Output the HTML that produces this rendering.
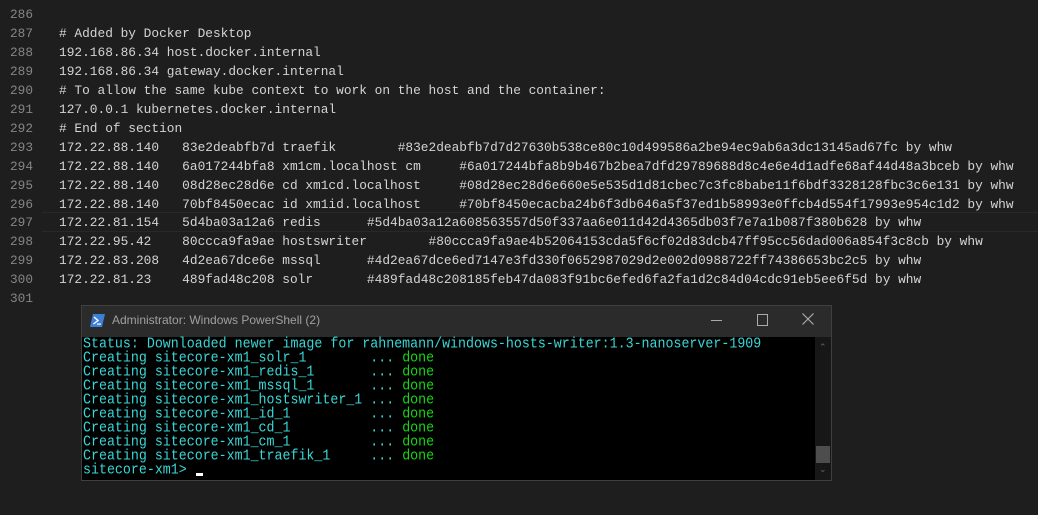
<!DOCTYPE html>
<html><head><style>
body{margin:0;width:1038px;height:515px;background:#1e1e1e;overflow:hidden;position:relative;font-family:"Liberation Mono",monospace}
.ln{position:absolute;left:0;width:33px;text-align:right;color:#858585;font-size:12.75px;line-height:19px;height:19px}
.tx{position:absolute;left:59px;color:#d4d4d4;font-size:12.83px;line-height:19px;white-space:pre}
.cur{position:absolute;left:42px;right:0;top:212px;height:18px;border-top:1px solid #282828;border-bottom:1px solid #282828}
.win{position:absolute;left:81px;top:305px;width:751px;height:176px;background:#2b2b2b;border:1px solid #3f3f3f;box-sizing:border-box}
.title{position:absolute;left:30px;top:7px;color:#a0a0a0;font-family:"Liberation Sans",sans-serif;font-size:12px}
.con{position:absolute;left:0;top:31px;width:733px;height:143px;background:#000}
.t{position:absolute;left:1px;font-size:13.3px;line-height:14px;white-space:pre;color:#3ad7d7;transform:scaleY(1.1);transform-origin:0 50%}
.g{color:#16d616}
.sb{position:absolute;left:733px;top:31px;width:16px;height:143px;background:#171717}
</style></head><body>
<div class="cur"></div>
<div class="ln" style="top:5px">286</div>
<div class="ln" style="top:24px">287</div><div class="tx" style="top:24px"># Added by Docker Desktop</div>
<div class="ln" style="top:43px">288</div><div class="tx" style="top:43px">192.168.86.34 host.docker.internal</div>
<div class="ln" style="top:62px">289</div><div class="tx" style="top:62px">192.168.86.34 gateway.docker.internal</div>
<div class="ln" style="top:81px">290</div><div class="tx" style="top:81px"># To allow the same kube context to work on the host and the container:</div>
<div class="ln" style="top:100px">291</div><div class="tx" style="top:100px">127.0.0.1 kubernetes.docker.internal</div>
<div class="ln" style="top:119px">292</div><div class="tx" style="top:119px"># End of section</div>
<div class="ln" style="top:138px">293</div><div class="tx" style="top:138px">172.22.88.140   83e2deabfb7d traefik        #83e2deabfb7d7d27630b538ce80c10d499586a2be94ec9ab6a3dc13145ad67fc by whw</div>
<div class="ln" style="top:157px">294</div><div class="tx" style="top:157px">172.22.88.140   6a017244bfa8 xm1cm.localhost cm     #6a017244bfa8b9b467b2bea7dfd29789688d8c4e6e4d1adfe68af44d48a3bceb by whw</div>
<div class="ln" style="top:176px">295</div><div class="tx" style="top:176px">172.22.88.140   08d28ec28d6e cd xm1cd.localhost     #08d28ec28d6e660e5e535d1d81cbec7c3fc8babe11f6bdf3328128fbc3c6e131 by whw</div>
<div class="ln" style="top:195px">296</div><div class="tx" style="top:195px">172.22.88.140   70bf8450ecac id xm1id.localhost     #70bf8450ecacba24b6f3db646a5f37ed1b58993e0ffcb4d554f17993e954c1d2 by whw</div>
<div class="ln" style="top:213px">297</div><div class="tx" style="top:213px">172.22.81.154   5d4ba03a12a6 redis      #5d4ba03a12a608563557d50f337aa6e011d42d4365db03f7e7a1b087f380b628 by whw</div>
<div class="ln" style="top:232px">298</div><div class="tx" style="top:232px">172.22.95.42    80ccca9fa9ae hostswriter        #80ccca9fa9ae4b52064153cda5f6cf02d83dcb47ff95cc56dad006a854f3c8cb by whw</div>
<div class="ln" style="top:251px">299</div><div class="tx" style="top:251px">172.22.83.208   4d2ea67dce6e mssql      #4d2ea67dce6ed7147e3fd330f0652987029d2e002d0988722ff74386653bc2c5 by whw</div>
<div class="ln" style="top:270px">300</div><div class="tx" style="top:270px">172.22.81.23    489fad48c208 solr       #489fad48c208185feb47da083f91bc6efed6fa2fa1d2c84d04cdc91eb5ee6f5d by whw</div>
<div class="ln" style="top:289px">301</div>

<div class="win">
<svg style="position:absolute;left:8px;top:8px" width="15" height="13"><polygon points="3,0 15,0 12,13 0,13" fill="#3d7fd6"/><path d="M4 3 L8 6.5 L3.5 10" stroke="#fff" stroke-width="1.4" fill="none"/><rect x="7" y="9.5" width="4" height="1.2" fill="#fff"/></svg>
<div class="title">Administrator: Windows PowerShell (2)</div>
<div style="position:absolute;left:629px;top:14px;width:11px;height:1px;background:#aaa"></div>
<div style="position:absolute;left:675px;top:8px;width:9px;height:10px;border:1px solid #aaa"></div>
<svg style="position:absolute;left:720px;top:7px" width="12" height="12"><path d="M0.5 0.5L11.5 11.5M11.5 0.5L0.5 11.5" stroke="#aaa" stroke-width="1.2"/></svg>
<div class="con">
<div class="t" style="top:0px">Status: Downloaded newer image for rahnemann/windows-hosts-writer:1.3-nanoserver-1909</div>
<div class="t" style="top:14px">Creating sitecore-xm1_solr_1        ... <span class="g">done</span></div>
<div class="t" style="top:28px">Creating sitecore-xm1_redis_1       ... <span class="g">done</span></div>
<div class="t" style="top:42px">Creating sitecore-xm1_mssql_1       ... <span class="g">done</span></div>
<div class="t" style="top:56px">Creating sitecore-xm1_hostswriter_1 ... <span class="g">done</span></div>
<div class="t" style="top:70px">Creating sitecore-xm1_id_1          ... <span class="g">done</span></div>
<div class="t" style="top:84px">Creating sitecore-xm1_cd_1          ... <span class="g">done</span></div>
<div class="t" style="top:98px">Creating sitecore-xm1_cm_1          ... <span class="g">done</span></div>
<div class="t" style="top:112px">Creating sitecore-xm1_traefik_1     ... <span class="g">done</span></div>
<div class="t" style="top:126px">sitecore-xm1&gt; </div>
<div style="position:absolute;left:114px;top:136px;width:7px;height:3px;background:#fff"></div>
</div>
<div class="sb">
<div style="position:absolute;left:4px;top:5px;color:#666;font-size:9px;font-family:'Liberation Sans',sans-serif">&#8963;</div>
<div style="position:absolute;left:1px;top:109px;width:14px;height:17px;background:#4d4d4d"></div>
<div style="position:absolute;left:4px;top:127px;color:#666;font-size:9px;font-family:'Liberation Sans',sans-serif">&#8964;</div>
</div>
</div>
</body></html>
